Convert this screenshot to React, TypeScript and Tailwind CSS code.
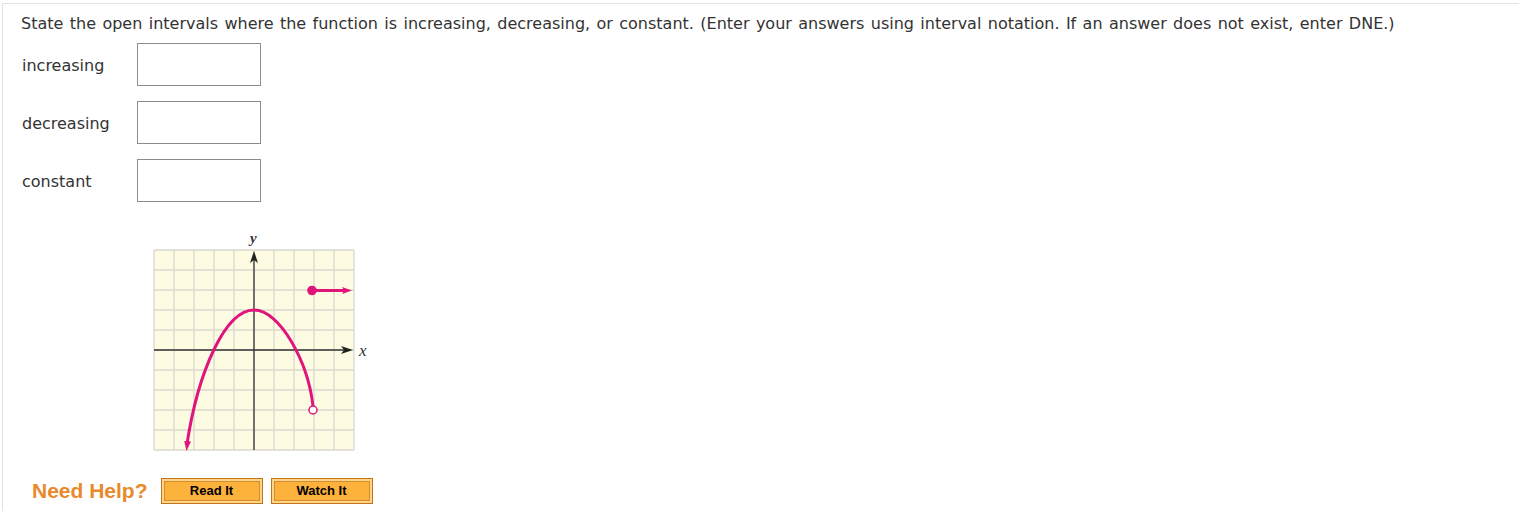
export default function App() {
  const rows = ['increasing', 'decreasing', 'constant']
  const gridLines = Array.from({ length: 11 }, (_, i) => 14 + i * 20)

  return (
    <div className="min-h-screen bg-white pt-[3px] pl-[2px]" style={{ fontFamily: '"DejaVu Sans", Verdana, sans-serif' }}>
      <div className="border-t border-l border-[#e3e3e3] min-h-[508px] pl-[18px] pt-[11px]">
        <p className="text-[16px] leading-[18px] text-[#333] [word-spacing:1.3px]">
          State the open intervals where the function is increasing, decreasing, or constant. (Enter your answers using interval notation. If an answer does not exist, enter DNE.)
        </p>

        <div className="mt-[10px] flex flex-col gap-[15px]">
          {rows.map((r) => (
            <div key={r} className="flex items-center">
              <span className="w-[116px] pl-[1px] pt-[3px] text-[16px] text-[#333]">{r}</span>
              <input
                type="text"
                className="w-[124px] h-[43px] border border-[#8c8c8c] bg-white outline-none"
              />
            </div>
          ))}
        </div>

        <svg width="240" height="236" viewBox="0 0 240 236" className="mt-[20px] ml-[119px] block">
          <rect x="14" y="28" width="200" height="200" fill="#fdfce3" />
          {gridLines.map((p) => (
            <g key={p}>
              <line x1={p} y1="28" x2={p} y2="228" stroke="#d9d8ce" strokeWidth="1.3" />
              <line x1="14" y1={p + 14} x2="214" y2={p + 14} stroke="#d9d8ce" strokeWidth="1.3" />
            </g>
          ))}
          {/* axes */}
          <line x1="114" y1="228" x2="114" y2="36" stroke="#333" strokeWidth="1.3" />
          <polygon points="114,29 110,41 114,38 118,41" fill="#222" />
          <line x1="14" y1="128" x2="206" y2="128" stroke="#333" strokeWidth="1.3" />
          <polygon points="213,128 201,124 204,128 201,132" fill="#222" />
          <text x="110" y="21" fontFamily="'Liberation Serif', serif" fontStyle="italic" fontWeight="bold" fontSize="15" fill="#333">y</text>
          <text x="219" y="134" fontFamily="'Liberation Serif', serif" fontStyle="italic" fontSize="17" fill="#333">x</text>

          {/* curve */}
          <path
            d="M47 222 C58 150 85 88 114 88 C140 88 168 140 173 184"
            fill="none"
            stroke="#e0157c"
            strokeWidth="3"
          />
          <polygon points="46.5,229 51,219.5 44.2,219" fill="#e0157c" />
          <circle cx="173" cy="188" r="4" fill="#fff" stroke="#e0157c" strokeWidth="1.5" />

          <line x1="172" y1="68.5" x2="204" y2="68.5" stroke="#e0157c" strokeWidth="3" />
          <polygon points="212,68.5 202,65 204,68.5 202,72" fill="#e0157c" />
          <circle cx="172" cy="68.5" r="4.8" fill="#e0157c" />
        </svg>

        <div className="mt-[17px] ml-[11px] flex items-center" style={{ fontFamily: '"Liberation Sans", Arial, sans-serif' }}>
          <span className="text-[21px] font-bold text-[#e8892b] mr-[13px]">Need Help?</span>
          <button className="w-[102px] h-[26px] border border-[#c37419] bg-[#fcd48a] p-[2px] mr-[8px]">
            <span className="flex h-full w-full items-center justify-center border border-[#d88d2d] bg-[#fdb23c] text-[13px] font-bold text-black">
              Read It
            </span>
          </button>
          <button className="w-[102px] h-[26px] border border-[#c37419] bg-[#fcd48a] p-[2px]">
            <span className="flex h-full w-full items-center justify-center border border-[#d88d2d] bg-[#fdb23c] text-[13px] font-bold text-black">
              Watch It
            </span>
          </button>
        </div>
      </div>
    </div>
  )
}
